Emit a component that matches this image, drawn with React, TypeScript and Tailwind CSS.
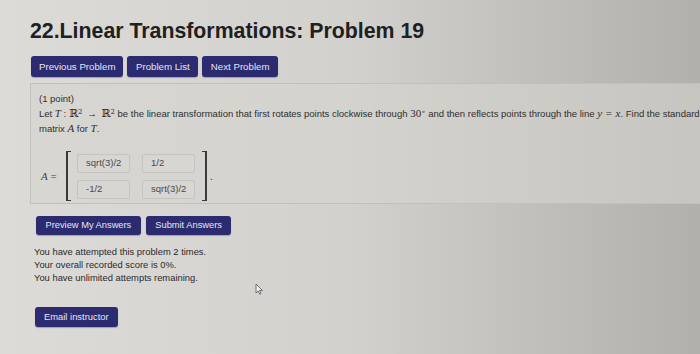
import React from "react";

const btn =
  "rounded-[3px] bg-[#2d2b70] text-[#e6e6f2] leading-none flex items-center shadow-[0_1px_1px_rgba(0,0,0,0.25)]";

function Math({ children }: { children: React.ReactNode }) {
  return <span className="font-['Liberation_Serif','DejaVu_Serif',serif] italic text-[11px]">{children}</span>;
}

function Reals() {
  return (
    <span className="font-['DejaVu_Serif',serif] text-[11px]">
      ℝ<sup className="text-[7px]">2</sup>
    </span>
  );
}

function Cell({ value }: { value: string }) {
  return (
    <div className="flex h-[19px] w-[53px] items-center rounded-[2px] border border-[#c6c4c0] bg-[#d8d6d2] pl-[8px] text-[9.5px] text-[#4a4a4a]">
      {value}
    </div>
  );
}

export default function App() {
  return (
    <div className="relative h-[354px] w-[700px] overflow-hidden bg-gradient-to-r from-[#dddbd7] via-[#d3d1cd] to-[#b2b0ac] font-['Liberation_Sans',Arial,sans-serif] text-[#2a2a2a]">
      <div className="pl-[30px] pt-[18px]">
        <h1 className="text-[21.3px] font-bold leading-[26px] text-[#202020]">
          22.Linear Transformations: Problem 19
        </h1>

        <div className="mt-[12px] flex h-[21px] gap-[4px] pl-[1px] text-[9.7px]">
          <div className={btn + " px-[8px]"}>Previous Problem</div>
          <div className={btn + " px-[8.5px]"}>Problem List</div>
          <div className={btn + " px-[8.5px]"}>Next Problem</div>
        </div>
      </div>

      <div className="ml-[30px] mt-[6px] h-[121px] border-t border-l border-b border-[#c2c0bc] bg-[#d5d3cf]/60 pl-[8px] pt-[8px] text-[9.5px] leading-[14px] text-[#2e2e2e]">
        <div>(1 point)</div>
        <div className="whitespace-nowrap">
          Let <Math>T</Math> : <Reals /> <span className="mx-[2px]">→</span> <Reals /> be the linear transformation
          that first rotates points clockwise through{" "}
          <span className="font-['Liberation_Serif',serif] text-[11px]">30</span>
          <sup className="font-['DejaVu_Sans',sans-serif] text-[7px]">∘</sup> and then reflects points through the
          line <Math>y</Math> <span className="mx-[1px] font-['Liberation_Serif',serif] text-[11px]">=</span>{" "}
          <Math>x</Math>. Find the standard
        </div>
        <div>
          matrix <Math>A</Math> for <Math>T</Math>.
        </div>

        <div className="mt-[15px] flex items-center">
          <div className="ml-[2px] w-[25px] font-['Liberation_Serif',serif] text-[11px] text-[#444]">
            <span className="italic">A</span> =
          </div>
          <div className="h-[50px] w-[5px] border-y-[1.5px] border-l-2 border-[#3a3a3a]" />
          <div className="ml-[6px] grid grid-cols-[53px_53px] gap-x-[12px] gap-y-[7px]">
            <Cell value="sqrt(3)/2" />
            <Cell value="1/2" />
            <Cell value="-1/2" />
            <Cell value="sqrt(3)/2" />
          </div>
          <div className="ml-[7px] h-[50px] w-[5px] border-y-[1.5px] border-r-2 border-[#3a3a3a]" />
          <span className="ml-[3px] mt-[2px] text-[10px]">.</span>
        </div>
      </div>

      <div className="pl-[36px] pt-[12px]">
        <div className="flex h-[19px] gap-[5px] text-[9.3px]">
          <div className={btn + " px-[9.5px]"}>Preview My Answers</div>
          <div className={btn + " px-[9.5px]"}>Submit Answers</div>
        </div>
        <div className="-ml-[2px] mt-[10px] text-[9.4px] leading-[13px] text-[#2a2a2a]">
          <div>You have attempted this problem 2 times.</div>
          <div>Your overall recorded score is 0%.</div>
          <div>You have unlimited attempts remaining.</div>
        </div>
        <div className="-ml-[1px] mt-[23px] flex h-[20px] text-[9.4px]">
          <div className={btn + " px-[9px]"}>Email instructor</div>
        </div>
      </div>

      <svg className="absolute left-[255px] top-[283px]" width="9" height="12" viewBox="0 0 9 12">
        <path
          d="M1 1 L1 10 L3.2 8 L4.8 11.2 L6 10.6 L4.5 7.5 L7.5 7.5 Z"
          fill="#eeeeee"
          stroke="#555"
          strokeWidth="0.8"
          strokeLinejoin="round"
        />
      </svg>
    </div>
  );
}
